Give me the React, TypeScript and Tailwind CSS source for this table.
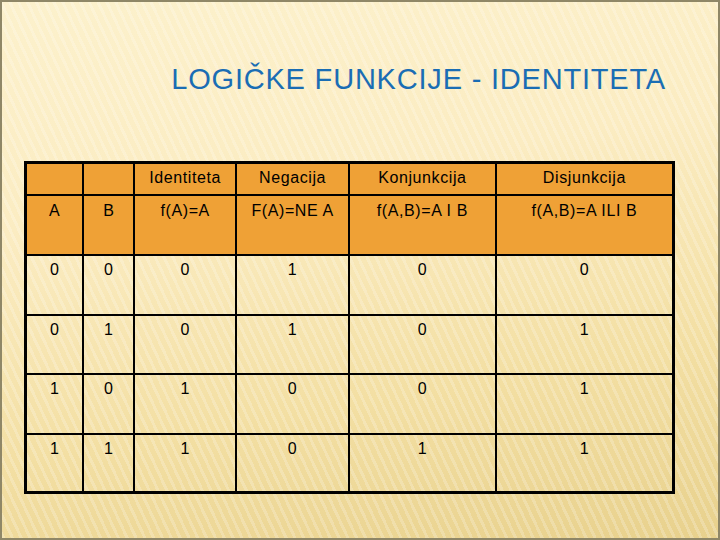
import React from "react";

const head = ["", "", "Identiteta", "Negacija", "Konjunkcija", "Disjunkcija"];
const sub = ["A", "B", "f(A)=A", "F(A)=NE A", "f(A,B)=A I B", "f(A,B)=A ILI B"];
const rows = [
  ["0", "0", "0", "1", "0", "0"],
  ["0", "1", "0", "1", "0", "1"],
  ["1", "0", "1", "0", "0", "1"],
  ["1", "1", "1", "0", "1", "1"],
];
const rowH = ["h-[60px]", "h-[59px]", "h-[60px]", "h-[59px]"];
const widths = ["w-[58px]", "w-[51px]", "w-[102px]", "w-[113px]", "w-[147px]", "w-[178px]"];

export default function App() {
  return (
    <div className="relative w-[720px] h-[540px] overflow-hidden border-2 border-[#8f8767] bg-[linear-gradient(170deg,#fcf1cc_0%,#fbecc2_35%,#f3dfa3_70%,#e8d18d_100%)] font-['Liberation_Sans',Arial,sans-serif]">
      <div className="absolute inset-0 bg-[repeating-linear-gradient(65deg,rgba(255,255,255,0.3)_0px,rgba(255,255,255,0.3)_3px,transparent_3px,transparent_8px)] opacity-70" />
      <div className="relative flex flex-col">
        <h1 className="mt-[63px] pr-[52px] text-right text-[29px] leading-none tracking-[0.8px] text-[#1a6db4]">
          LOGIČKE FUNKCIJE - IDENTITETA
        </h1>
        <table className="mt-[67px] ml-[22px] w-[651px] border-collapse border-[3px] border-black text-[16px] tracking-[0.6px] text-black">
          <colgroup>
            {widths.map((w, i) => (
              <col key={i} className={w} />
            ))}
          </colgroup>
          <tbody>
            <tr className="h-[32px] bg-[#efa136]">
              {head.map((h, i) => (
                <td key={i} className="border-2 border-black text-center align-top pt-[4px] pb-0 leading-5">
                  {h}
                </td>
              ))}
            </tr>
            <tr className="h-[60px] bg-[#efa136]">
              {sub.map((h, i) => (
                <td key={i} className="border-2 border-black text-center align-top pt-[5px] leading-5">
                  {h}
                </td>
              ))}
            </tr>
            {rows.map((r, ri) => (
              <tr key={ri} className={rowH[ri]}>
                {r.map((c, ci) => (
                  <td key={ci} className="border-2 border-black text-center align-top pt-[4px] leading-5">
                    {c}
                  </td>
                ))}
              </tr>
            ))}
          </tbody>
        </table>
      </div>
    </div>
  );
}
